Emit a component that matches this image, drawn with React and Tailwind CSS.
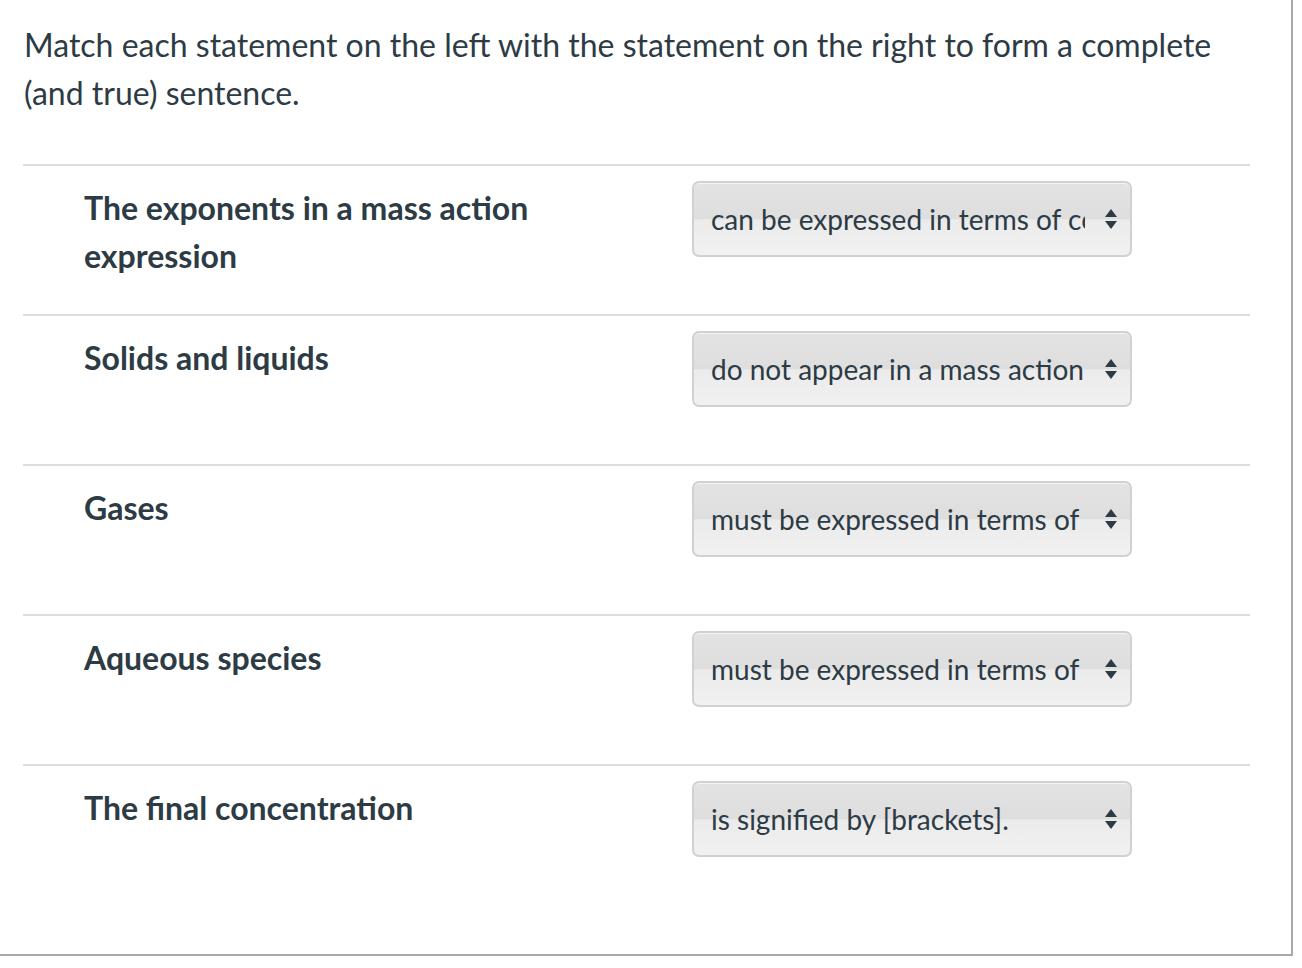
import React from "react";

const rows = [
  { label: ["The exponents in a mass action", "expression"], value: "can be expressed in terms of concentration" },
  { label: ["Solids and liquids"], value: "do not appear in a mass action expression" },
  { label: ["Gases"], value: "must be expressed in terms of partial pressure" },
  { label: ["Aqueous species"], value: "must be expressed in terms of concentration" },
  { label: ["The final concentration"], value: "is signified by [brackets]." },
];

function Arrows() {
  return (
    <svg width="14" height="22" viewBox="0 0 14 22" className="shrink-0">
      <polygon points="7,1 13,9 1,9" fill="#2d3b45" />
      <polygon points="1,13 13,13 7,21" fill="#2d3b45" />
    </svg>
  );
}

function Select({ value }) {
  return (
    <div className="w-[440px] h-[76px] rounded-[7px] border-2 border-[#cfd2d4] bg-[linear-gradient(to_bottom,#e3e3e3_0%,#dedede_50%,#ebebeb_51%,#f1f1f1_100%)] shadow-[inset_0_1px_0_rgba(255,255,255,0.6)] flex items-center pl-[17px] pr-[12px]">
      <div className="flex-1 whitespace-nowrap text-[28px] leading-[40px] text-[#2d3b45]">
        <span className="block w-[374px] overflow-hidden">{value}</span>
      </div>
      <Arrows />
    </div>
  );
}

export default function App() {
  return (
    <div className="w-[1293px] h-[956px] bg-white border-r-2 border-b-2 border-[#a9a9a9] font-['Lato',sans-serif] text-[#2d3b45]">
      <div className="pl-[24px] pr-[60px] pt-[21px] text-[32px] leading-[48px]">
        Match each statement on the left with the statement on the right to form a complete (and true) sentence.
      </div>
      <div className="mt-[47px] ml-[23px] w-[1227px]">
        {rows.map((r, i) => (
          <div key={i} className="h-[150px] border-t-2 border-[#dddddd] flex">
            <div className="w-[669px] pl-[61px] pt-[18px] font-bold text-[32px] leading-[48px]">
              {r.label.map((l, j) => (
                <div key={j}>{l}</div>
              ))}
            </div>
            <div className="pt-[15px]">
              <Select value={r.value} />
            </div>
          </div>
        ))}
      </div>
    </div>
  );
}
